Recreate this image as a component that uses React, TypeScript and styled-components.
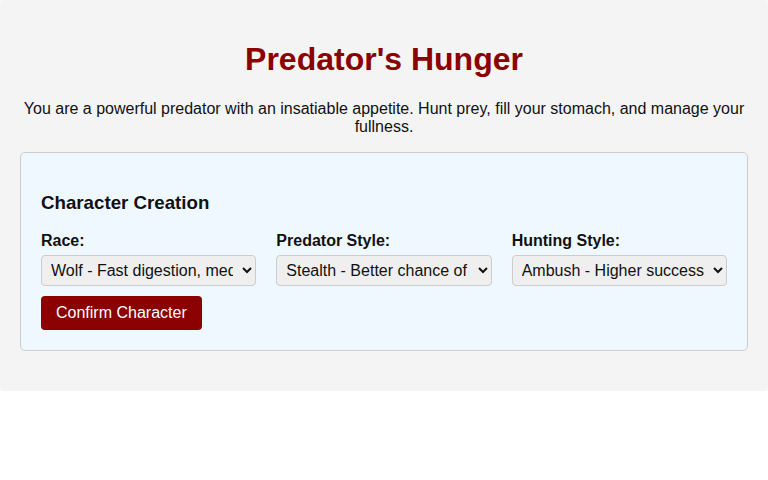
import styled, { createGlobalStyle } from "styled-components";

const GlobalStyle = createGlobalStyle`
  html, body {
    margin: 0;
    padding: 0;
    background: #fff;
    font-family: "Liberation Sans", Arial, sans-serif;
  }
`;

const Container = styled.div`
  max-width: 800px;
  margin: 0 auto;
  padding: 20px;
  background: #f4f4f4;
  border-radius: 8px;
  box-shadow: 0 0 10px rgba(0, 0, 0, 0.1);
`;

const Title = styled.h1`
  margin: 0.67em 0;
  font-size: 32px;
  font-weight: 700;
  color: #8b0000;
  text-align: center;
`;

const Intro = styled.p`
  margin: 16px 0;
  font-size: 16px;
  line-height: 18px;
  color: #111;
  text-align: center;
`;

const Panel = styled.section`
  margin-bottom: 20px;
  padding: 20px;
  background: #f0f8ff;
  border: 1px solid #ccc;
  border-radius: 5px;
`;

const PanelTitle = styled.h3`
  margin: 1em 0;
  font-size: 18.72px;
  font-weight: 700;
  color: #111;
`;

const FieldGrid = styled.div`
  display: grid;
  grid-template-columns: repeat(3, 1fr);
  gap: 20px;
`;

const Field = styled.div`
  display: flex;
  flex-direction: column;
  min-width: 0;
`;

const Label = styled.label`
  margin-bottom: 5px;
  font-size: 16px;
  font-weight: 700;
  color: #111;
`;

const Select = styled.select`
  width: 100%;
  height: 31px;
  padding: 4px 6px 4px 5px;
  font-family: "Liberation Sans", Arial, sans-serif;
  font-size: 16px;
  color: #111;
  background: #efefef;
  border: 1px solid #ccc;
  border-radius: 4px;
`;

const ConfirmButton = styled.button`
  margin-top: 10px;
  padding: 8px 15px;
  font-family: "Liberation Sans", Arial, sans-serif;
  font-size: 16px;
  line-height: 18px;
  color: #fff;
  background: #8b0000;
  border: none;
  border-radius: 4px;
  cursor: pointer;
`;

const fields = [
  {
    id: "race",
    label: "Race:",
    options: [
      "Wolf - Fast digestion, medium capacity",
      "Bear - Large capacity, slow digestion",
      "Snake - Huge capacity, very slow digestion",
    ],
  },
  {
    id: "predator",
    label: "Predator Style:",
    options: [
      "Stealth - Better chance of catching prey",
      "Brute - Overpower larger prey",
    ],
  },
  {
    id: "hunting",
    label: "Hunting Style:",
    options: [
      "Ambush - Higher success rate",
      "Chase - Find more prey",
    ],
  },
];

export default function App() {
  return (
    <>
      <GlobalStyle />
      <Container>
        <Title>Predator's Hunger</Title>
        <Intro>
          You are a powerful predator with an insatiable appetite. Hunt prey,
          fill your stomach, and manage your fullness.
        </Intro>
        <Panel>
          <PanelTitle>Character Creation</PanelTitle>
          <FieldGrid>
            {fields.map((f) => (
              <Field key={f.id}>
                <Label htmlFor={f.id}>{f.label}</Label>
                <Select id={f.id} defaultValue={f.options[0]}>
                  {f.options.map((o) => (
                    <option key={o}>{o}</option>
                  ))}
                </Select>
              </Field>
            ))}
          </FieldGrid>
          <ConfirmButton>Confirm Character</ConfirmButton>
        </Panel>
      </Container>
    </>
  );
}
